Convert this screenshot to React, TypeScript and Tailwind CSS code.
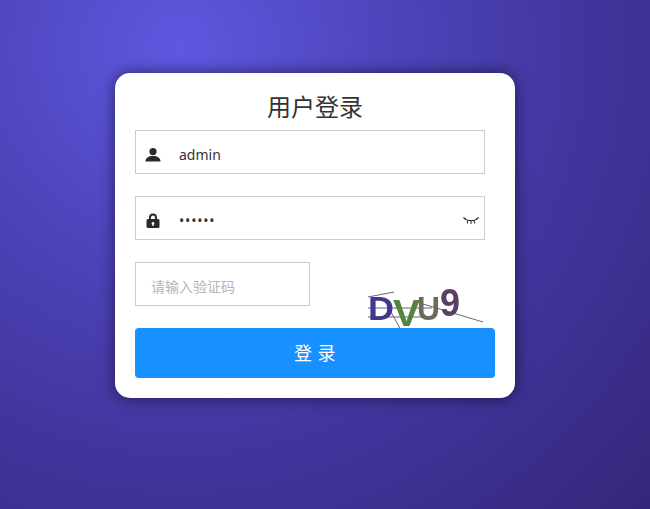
export default function App() {
  return (
    <div className="h-[509px] w-[650px] overflow-hidden bg-[radial-gradient(circle_at_180px_50px,#5f58e0_0%,#4f45bd_30%,#42369f_60%,#34277a_100%)] pt-[73px] pl-[115px] font-['Noto_Sans','Noto_Sans_CJK_SC',sans-serif]">
      <div className="h-[325px] w-[400px] rounded-[15px] bg-white px-5 pt-[14px] shadow-[0_0_15px_rgba(0,0,0,0.55)]">
        <h1 className="h-[43px] text-center text-2xl leading-[40px] font-normal text-[#333]">用户登录</h1>

        {/* 用户名 */}
        <div className="mb-[22px] flex h-[44px] w-[350px] items-center border border-[#ccc] pt-[6px]">
          <svg viewBox="0 0 16 16" className="ml-[9px] h-4 w-4 fill-[#2b2b2b]">
            <circle cx="8" cy="4.6" r="3.6" />
            <path d="M0.5 14.5c0-3.6 3-5.5 7.5-5.5s7.5 1.900 7.500 5.500z" />
          </svg>
          <input readOnly value="admin" className="ml-[18px] w-[280px] text-sm text-[#333] outline-none" />
        </div>

        {/* 密码 */}
        <div className="mb-[22px] flex h-[44px] w-[350px] items-center border border-[#ccc] pt-[6px]">
          <svg viewBox="0 0 16 16" className="ml-[9px] h-4 w-4 fill-[#2b2b2b]">
            <path fillRule="evenodd" d="M4 6V4.6a4 4 0 0 1 8 0V6h1a1.500 1.500 0 0 1 1.500 1.500v6A1.500 1.500 0 0 1 13 15H3a1.500 1.500 0 0 1-1.500-1.500v-6A1.500 1.500 0 0 1 3 6zm2 0h4V4.600a2 2 0 0 0-4 0zm2 3a1.400 1.400 0 0 0-.7 2.600V13h1.400v-1.400A1.400 1.400 0 0 0 8 9z" />
          </svg>
          <input readOnly type="password" value="123456" className="ml-[18px] w-[280px] text-sm tracking-[0.8px] text-[#333] outline-none" />
          <svg viewBox="0 0 16 10" className="mr-[5px] ml-auto h-[10px] w-4 fill-none stroke-[#222] stroke-[1]">
            <path d="M0.500 2c3.500 3.500 11.500 3.500 15 0M0.500 1.500l2.500 1.500M15.500 1.500l-2.500 1.500M5 4.500l-.8 3M11 4.500l.8 3M8 5v3" />
          </svg>
        </div>

        {/* 验证码 */}
        <div className="flex h-[44px] items-start">
          <div className="flex h-[44px] w-[175px] items-center border border-[#ccc] pt-[6px]">
            <input placeholder="请输入验证码" className="ml-[15px] w-[150px] text-sm text-[#333] outline-none placeholder:text-[#b5b5b5]" />
          </div>
          <svg viewBox="0 0 120 46" className="mt-[22px] ml-[55px] h-[46px] w-[120px] shrink-0 overflow-visible font-['Liberation_Sans',sans-serif] blur-[0.5px]">
            <path d="M3 13l26-5M3 24l64 0M3 33l64 0M26 28l10 18M58 20l60 18" fill="none" stroke="#6b6180" strokeWidth="1" />
            <text x="3" y="36" fontSize="34" fontWeight="700" textLength="26" lengthAdjust="spacingAndGlyphs" fill="#3f3a8f">D</text>
            <text x="28" y="42" fontSize="36" fontWeight="700" textLength="27" lengthAdjust="spacingAndGlyphs" fill="#55853a">V</text>
            <text x="52" y="36" fontSize="34" fontWeight="700" textLength="23" lengthAdjust="spacingAndGlyphs" fill="#6d6a5c">U</text>
            <text x="75" y="32" fontSize="38" fontWeight="700" textLength="20" lengthAdjust="spacingAndGlyphs" fill="#5a4064">9</text>
          </svg>
        </div>

        <button className="relative mt-[22px] h-[50px] w-[360px] rounded-[4px] bg-[#1890ff] text-lg tracking-[0.5px] text-white">登 录</button>
      </div>
    </div>
  );
}
